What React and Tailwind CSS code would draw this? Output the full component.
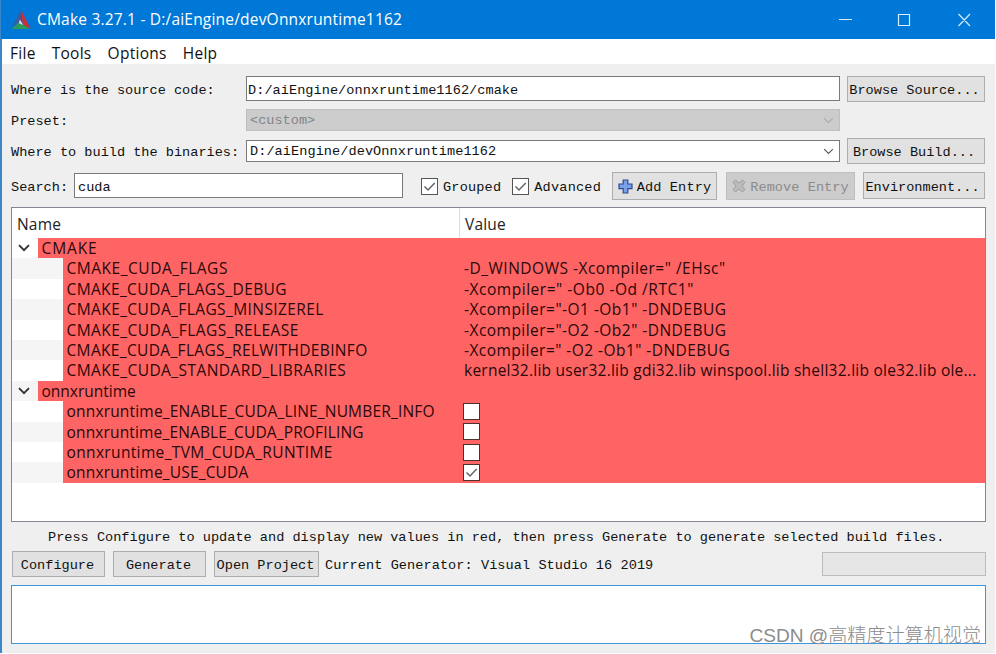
const UI = "font-['Open_Sans','Noto_Sans',sans-serif]";
const MONO = "font-['Liberation_Mono',monospace]";

function CMakeLogo() {
  return (
    <svg className="ml-[10px] h-5 w-5 shrink-0" viewBox="0 0 20 20">
      <path d="M9.6 .5 L1 17.5 L8.8 11 Z" fill="#3f5a9a" />
      <path d="M10.4 .5 L19.5 18.5 L11.6 15 Z" fill="#c9303c" />
      <path d="M10 .5 L8.8 10.8 L11.6 14.8 Z" fill="#6b4470" />
      <path d="M.5 19 L8.2 12.3 L19 19 Z" fill="#2d9a58" />
      <path d="M8.9 9.6 L12.2 15 L7.8 13.2 Z" fill="#d3dde6" />
    </svg>
  );
}

function Check({ on = true, dim = false }) {
  return (
    <span className={"flex h-[17px] w-[17px] shrink-0 items-center justify-center border bg-white " + (dim ? "border-[#4d3030]" : "border-[#555]")}>
      {on && (
        <svg className="h-[15px] w-[15px]" viewBox="0 0 15 15" fill="none" stroke="#666" strokeWidth="1.5">
          <path d="M2.5 7.5 L6 11 L12.7 4" />
        </svg>
      )}
    </span>
  );
}

function Chevron({ className, color, width = 1.2 }) {
  return (
    <svg className={className} viewBox="0 0 12 8" fill="none" stroke={color} strokeWidth={width}>
      <path d="M1 1.2 L6 6.2 L11 1.2" />
    </svg>
  );
}

function Button({ className, children }) {
  return (
    <button className={"flex shrink-0 items-center justify-center whitespace-pre border border-[#adadad] bg-[#e1e1e1] " + className}>
      {children}
    </button>
  );
}

const rows = [
  { name: "CMAKE", group: true, track: "tracking-[0.9px]" },
  { name: "CMAKE_CUDA_FLAGS", track: "tracking-[0.53px]", value: '-D_WINDOWS -Xcompiler=" /EHsc"', valueTrack: "tracking-[0.5px]" },
  { name: "CMAKE_CUDA_FLAGS_DEBUG", track: "tracking-[0.37px]", value: '-Xcompiler=" -Ob0 -Od /RTC1"', valueTrack: "tracking-[0.53px]" },
  { name: "CMAKE_CUDA_FLAGS_MINSIZEREL", track: "tracking-[0.41px]", value: '-Xcompiler="-O1 -Ob1" -DNDEBUG', valueTrack: "tracking-[0.47px]" },
  { name: "CMAKE_CUDA_FLAGS_RELEASE", track: "tracking-[0.45px]", value: '-Xcompiler="-O2 -Ob2" -DNDEBUG', valueTrack: "tracking-[0.47px]" },
  { name: "CMAKE_CUDA_FLAGS_RELWITHDEBINFO", track: "tracking-[0.34px]", value: '-Xcompiler=" -O2 -Ob1" -DNDEBUG', valueTrack: "tracking-[0.45px]" },
  {
    name: "CMAKE_CUDA_STANDARD_LIBRARIES",
    track: "tracking-[0.43px]",
    value: "kernel32.lib user32.lib gdi32.lib winspool.lib shell32.lib ole32.lib ole...",
    valueTrack: "tracking-[0.24px]",
  },
  { name: "onnxruntime", group: true, track: "tracking-normal" },
  { name: "onnxruntime_ENABLE_CUDA_LINE_NUMBER_INFO", track: "tracking-[0.18px]", check: false },
  { name: "onnxruntime_ENABLE_CUDA_PROFILING", track: "tracking-[0.15px]", check: false },
  { name: "onnxruntime_TVM_CUDA_RUNTIME", track: "tracking-[0.35px]", check: false },
  { name: "onnxruntime_USE_CUDA", track: "tracking-[0.18px]", check: true },
];

function Row({ row, odd }) {
  return (
    <div className={"flex h-[20.4px] whitespace-pre leading-[21px] " + (odd ? "bg-[#f5f5f5]" : "bg-white")}>
      <div className={"flex shrink-0 items-center " + (row.group ? "w-[26px] pl-[6px]" : "w-[51px]")}>
        {row.group && <Chevron className="h-2 w-3" color="#333" width={1.9} />}
      </div>
      <div className="flex min-w-0 flex-1 bg-[#ff6464] text-[#2b0808]">
        <span className={"shrink-0 pl-[3.5px] " + (row.group ? "w-[425px] " : "w-[400px] ") + row.track}>{row.name}</span>
        {row.value && <span className={"pl-px " + row.valueTrack}>{row.value}</span>}
        {row.check !== undefined && (
          <span className="flex items-center">
            <Check on={row.check} dim />
          </span>
        )}
      </div>
    </div>
  );
}

export default function App() {
  return (
    <div className={"flex h-[654px] w-[996px] overflow-hidden bg-white text-[13.58px] text-[#111] " + MONO}>
      <div className="flex h-[653px] w-[995px] flex-col border-l-2 border-[#3c87c8] bg-[#efefef]">
        <header className={"-ml-px flex h-[39px] shrink-0 items-center bg-[#0078d7] text-white " + UI}>
          <CMakeLogo />
          <span className="ml-[6px] pt-px text-[15.5px] tracking-[0.2px]">CMake 3.27.1 - D:/aiEngine/devOnnxruntime1162</span>
          <svg className="ml-auto mr-[23px] h-[14px] w-[134px]" viewBox="0 0 134 14" fill="none" stroke="#d8ecfb" strokeWidth="1.2">
            <path d="M1 6.5 H14 M60.5 1.5 H71.5 V12.5 H60.5 Z M120.5 1 L132 13 M132 1 L120.5 13" />
          </svg>
        </header>
        <nav className={"flex h-[25px] shrink-0 items-center gap-4 bg-white pl-2 pt-[4px] text-[15.5px] tracking-[0.28px] " + UI}>
          <span>File</span>
          <span>Tools</span>
          <span>Options</span>
          <span>Help</span>
        </nav>

        <main className="flex flex-1 flex-col pl-[9px] pr-[9px] pt-3">
          <div className="flex h-[27px]">
            <span className="w-[235px] whitespace-pre leading-[30px]">Where is the source code:</span>
            <div className="h-[25px] w-[594px] border border-[#7a7a7a] bg-white pl-px leading-[27px] tracking-[0.04px]">D:/aiEngine/onnxruntime1162/cmake</div>
            <Button className="ml-[7px] h-[26px] w-[138px] pr-[3px] pt-[4px]">Browse Source...</Button>
          </div>
          <div className="mt-[6px] flex h-[22px]">
            <span className="w-[235px] leading-[25px]">Preset:</span>
            <div className="flex w-[594px] items-center justify-between border border-[#bfbfbf] bg-[#cccccc] pl-[3px] pr-[5px] text-[#858585]">
              <span className="pt-0.5">&lt;custom&gt;</span>
              <Chevron className="h-[7px] w-[11px]" color="#aaa" />
            </div>
          </div>
          <div className="mt-[7px] flex h-[27px]">
            <span className="w-[235px] whitespace-pre leading-[30px]">Where to build the binaries:</span>
            <div className="mt-[2px] flex h-[22px] w-[594px] items-center justify-between border border-[#7a7a7a] bg-white pl-[3px] pr-[5px]">
              <span className="pt-0.5 tracking-[0.06px]">D:/aiEngine/devOnnxruntime1162</span>
              <Chevron className="h-[7px] w-[11px]" color="#555" />
            </div>
            <Button className="ml-[7px] h-[26px] w-[138px] pr-1 pt-1">Browse Build...</Button>
          </div>
          <div className="mt-[7px] flex h-[28px]">
            <span className="w-[63px] leading-[32px]">Search:</span>
            <div className="mt-px h-[25px] w-[329px] border border-[#7a7a7a] bg-white pl-[3px] leading-[28px]">cuda</div>
            <div className="ml-[18px] flex items-center gap-[5px]">
              <Check />
              <span className="pt-1 tracking-[0.17px]">Grouped</span>
            </div>
            <div className="ml-[11px] flex items-center gap-[5px]">
              <Check />
              <span className="pt-1 tracking-[0.2px]">Advanced</span>
            </div>
            <Button className="ml-auto h-[28px] w-[105px] gap-1">
              <svg className="h-[15px] w-[15px]" viewBox="0 0 15 15">
                <path d="M5.2 1 H9.8 V5 H14 V9.6 H9.8 V14 H5.2 V9.6 H1 V5 H5.2 Z" fill="#7b9fe8" stroke="#2c4a92" strokeWidth="1.2" />
              </svg>
              <span className="pt-1 tracking-[0.12px]">Add Entry</span>
            </Button>
            <button className="ml-[9px] flex h-[28px] w-[129px] shrink-0 items-center justify-center gap-1 whitespace-pre border border-[#bfbfbf] bg-[#cccccc] text-[#8b8b8b]">
              <svg className="h-[14px] w-[14px]" viewBox="0 0 14 14">
                <path d="M3.5 1 L7 4.2 L10.5 1 L13 3.5 L9.8 7 L13 10.5 L10.5 13 L7 9.8 L3.5 13 L1 10.5 L4.2 7 L1 3.5 Z" fill="#bcbcbc" stroke="#9c9c9c" />
              </svg>
              <span className="pt-1 tracking-[0.06px]">Remove Entry</span>
            </button>
            <Button className="ml-2 mr-px h-[27px] w-[122px] pr-[3px] pt-[5px]">Environment...</Button>
          </div>

          <section className={"mt-[7px] h-[315px] shrink-0 border border-[#828790] bg-white text-[15.5px] " + UI}>
            <div className="flex h-[30px] leading-[32px] tracking-[0.2px] text-[#222]">
              <span className="w-[448px] border-r border-[#dcdcdc] pl-[5px]">Name</span>
              <span className="pl-[5px]">Value</span>
            </div>
            {rows.map((row, i) => (
              <Row key={row.name} row={row} odd={i % 2 === 1} />
            ))}
          </section>

          <p className="h-[29px] shrink-0 whitespace-pre pl-[37px] leading-[31px]">
            Press Configure to update and display new values in red, then press Generate to generate selected build files.
          </p>
          <div className="flex h-[26px] shrink-0 pl-px">
            <Button className="w-[93px] pr-0.5 pt-[5px]">Configure</Button>
            <Button className="ml-2 w-[93px] pr-0.5 pt-[5px]">Generate</Button>
            <Button className="ml-2 w-[105px] pr-0.5 pt-[5px]">Open Project</Button>
            <span className="ml-[6px] whitespace-pre leading-[30px] tracking-[0.06px]">Current Generator: Visual Studio 16 2019</span>
            <div className="ml-auto mt-px h-[24px] w-[164px] border border-[#bcbcbc] bg-[#e6e6e6]" />
          </div>
          <div className="relative mt-2 h-[59px] shrink-0 border border-[#3a96dd] bg-white">
            <span className="absolute right-[4px] top-[36px] whitespace-nowrap font-['Liberation_Sans','Noto_Sans_CJK_SC',sans-serif] text-[19.1px] font-light leading-[28px] text-[#8c8c8c]">
              CSDN @高精度计算机视觉
            </span>
          </div>
        </main>
      </div>
    </div>
  );
}
